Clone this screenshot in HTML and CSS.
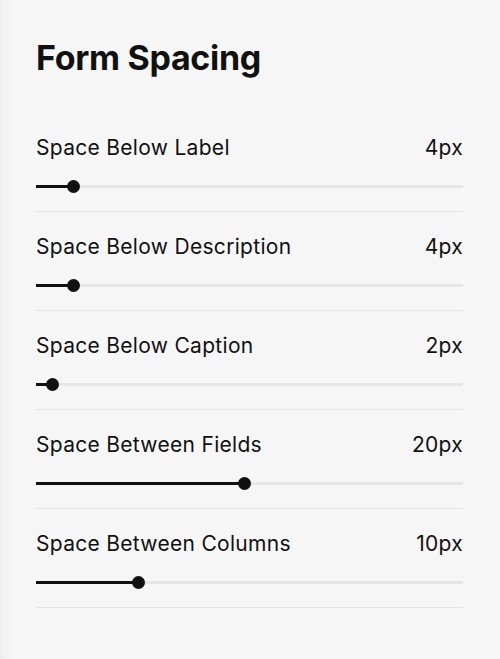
FILE: index.html
```html
<!DOCTYPE html>
<html lang="en">
<head>
  <meta charset="UTF-8" />
  <title>Form Spacing</title>
  <link rel="stylesheet" href="styles.css">
</head>
<body>
  <div class="panel">
    <h1 class="panel-title">Form Spacing</h1>

    <!-- one row per spacing setting: label, value, slider -->
    <div class="setting">
      <div class="setting-head">
        <span class="setting-label">Space Below Label</span>
        <span class="setting-value">4px</span>
      </div>
      <div class="slider"><div class="slider-fill" style="width: 37px"></div></div>
    </div>

    <div class="setting">
      <div class="setting-head">
        <span class="setting-label">Space Below Description</span>
        <span class="setting-value">4px</span>
      </div>
      <div class="slider"><div class="slider-fill" style="width: 37px"></div></div>
    </div>

    <div class="setting">
      <div class="setting-head">
        <span class="setting-label">Space Below Caption</span>
        <span class="setting-value">2px</span>
      </div>
      <div class="slider"><div class="slider-fill" style="width: 16px"></div></div>
    </div>

    <div class="setting">
      <div class="setting-head">
        <span class="setting-label">Space Between Fields</span>
        <span class="setting-value">20px</span>
      </div>
      <div class="slider"><div class="slider-fill" style="width: 208px"></div></div>
    </div>

    <div class="setting">
      <div class="setting-head">
        <span class="setting-label">Space Between Columns</span>
        <span class="setting-value">10px</span>
      </div>
      <div class="slider"><div class="slider-fill" style="width: 102px"></div></div>
    </div>
  </div>
</body>
</html>
```

FILE: styles.css
```css
body {
  margin: 0;
  min-height: 100vh;
  background: linear-gradient(to right, #eeeeee 0, #f6f6f6 12px);
  color: #111;
  font-family: Inter, "Noto Sans", sans-serif;
}
.panel { width: 427px; padding: 38px 0 0 36px; }
.panel-title {
  margin: 0 0 35px; font-size: 34px; line-height: 40px; font-weight: 700; letter-spacing: -0.3px;
}

.setting { padding: 23px 0 18px; border-bottom: 1px solid #e4e4e4; }
.setting-head {
  display: flex; justify-content: space-between;
  font-size: 21px; line-height: 24px; letter-spacing: 0.3px;
}

.slider {
  display: flex; align-items: center; height: 13px; margin-top: 20px;
  background: linear-gradient(#e6e6e6, #e6e6e6) center / 100% 3px no-repeat;
}
.slider-fill { position: relative; height: 3px; background: #111; }
.slider-fill::after {
  content: ""; position: absolute; right: -6.5px; top: -5px;
  width: 13px; height: 13px; border-radius: 50%; background: #111;
}
```
